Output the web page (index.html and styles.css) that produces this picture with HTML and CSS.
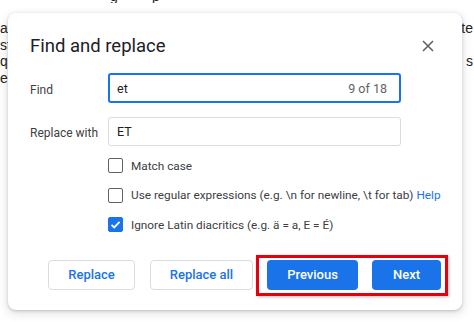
FILE: index.html
```html
<!DOCTYPE html>
<html>
<head>
<meta charset="utf-8">
<link rel="stylesheet" href="styles.css">
</head>
<body>
<div class="page">
  <div class="topline"><span class="g1">g</span><span class="g2">p</span></div>
  <div class="bgline"><span>a</span><span>nte</span></div>
  <div class="bgline"><span>st</span><span></span></div>
  <div class="bgline"><span>qu</span><span>s</span></div>
  <div class="bgline"><span>er</span><span></span></div>
</div>

<div class="dialog">
  <div class="header">
    <h1 class="title">Find and replace</h1>
    <button class="close" aria-label="Close">
      <svg width="24" height="24" viewBox="0 0 24 24"><path d="M7 7 L17 17 M17 7 L7 17" stroke="#5f6368" stroke-width="1.6" fill="none"/></svg>
    </button>
  </div>

  <div class="form">
    <div class="row">
      <label class="label">Find</label>
      <div class="input active"><span>et</span><span class="count">9 of 18</span></div>
    </div>
    <div class="row">
      <label class="label">Replace with</label>
      <div class="input"><span>ET</span></div>
    </div>
    <div class="checks">
      <div class="check"><span class="box"></span><span>Match case</span></div>
      <div class="check"><span class="box"></span><span>Use regular expressions (e.g. \n for newline, \t for tab) <a class="help">Help</a></span></div>
      <div class="check"><span class="box on"><svg width="15" height="15" viewBox="0 0 15 15"><path d="M3.5 7.8 L6.2 10.4 L11.6 4.8" stroke="#fff" stroke-width="1.8" fill="none"/></svg></span><span>Ignore Latin diacritics (e.g. ä = a, E = É)</span></div>
    </div>
  </div>

  <div class="buttons">
    <button class="btn outline w-replace">Replace</button>
    <button class="btn outline w-all">Replace all</button>
    <div class="nav">
      <button class="btn filled w-prev">Previous</button>
      <button class="btn filled w-next">Next</button>
      <div class="highlight"></div>
    </div>
  </div>
</div>
</body>
</html>
```
FILE: styles.css
```css
html, body {
  margin: 0;
  padding: 0;
  background: #fff;
}
body {
  width: 474px;
  height: 322px;
  overflow: hidden;
  position: relative;
  font-family: Roboto, "Liberation Sans", sans-serif;
  color: #3c4043;
}
.page {
  font-family: Arial, "Liberation Sans", sans-serif;
  font-size: 14px;
  color: #222;
}
.topline {
  height: 3px;
  position: relative;
  overflow: hidden;
}
.topline span {
  position: absolute;
  top: -12px;
}
.topline .g1 { left: 110px; }
.topline .g2 { left: 152px; }
.bgline {
  display: flex;
  justify-content: space-between;
  line-height: 16.6px;
  margin-right: 1px;
}
.topline + .bgline { margin-top: 17px; }

.dialog {
  position: absolute;
  left: 8px;
  top: 13px;
  width: 454px;
  height: 297px;
  box-sizing: border-box;
  background: #fff;
  border-radius: 8px;
  box-shadow: 0 1px 3px rgba(60,64,67,.25), 0 3px 8px 2px rgba(60,64,67,.12);
  padding: 20px 21px 0 22px;
}
.header {
  display: flex;
  justify-content: space-between;
  align-items: center;
  height: 25px;
}
.title {
  margin: 0;
  font-size: 18.5px;
  font-weight: 400;
  color: #202124;
}
.close {
  border: 0;
  background: none;
  padding: 0;
  width: 24px;
  height: 24px;
  margin-right: 1px;
}
.form {
  margin-top: 15px;
}
.row {
  display: flex;
  align-items: center;
  margin-bottom: 14px;
}
.label {
  width: 78px;
  font-size: 12px;
  color: #3c4043;
  padding-top: 3px;
}
.input {
  width: 293px;
  height: 29px;
  box-sizing: border-box;
  border: 1px solid #dadce0;
  border-radius: 3px;
  display: flex;
  align-items: center;
  justify-content: space-between;
  padding: 0 13px 0 8px;
  font-size: 12.5px;
  color: #202124;
}
.input.active {
  border: 2px solid #1a73e8;
  height: 30px;
  padding: 0 12px 0 7px;
}
.count {
  color: #5f6368;
}
.checks {
  margin-left: 78px;
  margin-top: -9px;
}
.check {
  display: flex;
  align-items: center;
  height: 29.5px;
  font-size: 11.8px;
  color: #3c4043;
  white-space: nowrap;
}
.box {
  width: 15px;
  height: 15px;
  box-sizing: border-box;
  border: 1.5px solid #5f6368;
  border-radius: 2px;
  margin-right: 8px;
  flex: none;
}
.box.on {
  background: #1a73e8;
  border-color: #1a73e8;
  position: relative;
}
.box.on svg {
  position: absolute;
  left: -1.5px;
  top: -1.5px;
}
.help {
  color: #1a73e8;
}
.buttons {
  display: flex;
  align-items: center;
  margin-top: 20px;
  padding-left: 18px;
  gap: 15px;
}
.btn {
  height: 30px;
  border-radius: 4px;
  font-family: Roboto, "Liberation Sans", sans-serif;
  font-size: 13px;
  font-weight: 500;
  padding: 0;
  box-sizing: border-box;
}
.outline {
  background: #fff;
  border: 1px solid #dadce0;
  color: #1a73e8;
}
.filled {
  background: #1a73e8;
  border: 0;
  color: #fff;
}
.w-replace { width: 87px; }
.w-all { width: 103px; }
.w-prev { width: 91px; }
.w-next { width: 69px; }
.nav {
  position: relative;
  display: flex;
  gap: 14px;
  margin-left: -1px;
}
.highlight {
  position: absolute;
  left: -11px;
  top: -5px;
  right: -7px;
  bottom: -6px;
  border: 3px solid #e3000f;
  box-shadow: 1px 1px 3px rgba(0,0,0,.25);
}
```
